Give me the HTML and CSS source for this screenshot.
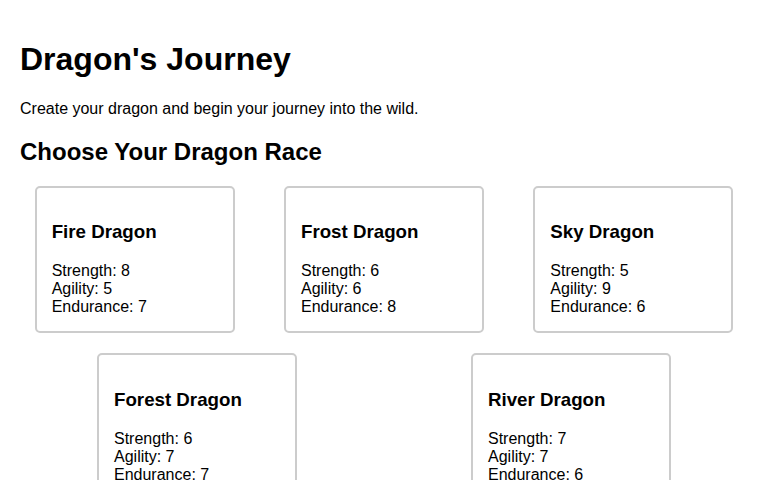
FILE: index.html
```html
<!DOCTYPE html>
<html lang="en">
<head>
<meta charset="utf-8">
<title>Dragon's Journey</title>
<link rel="stylesheet" href="styles.css">
</head>
<body>
  <h1 class="title">Dragon's Journey</h1>
  <p class="intro">Create your dragon and begin your journey into the wild.</p>
  <h2 class="section-title">Choose Your Dragon Race</h2>
  <div class="races">
    <div class="race-card">
      <h3 class="race-name">Fire Dragon</h3>
      <div class="stats">
        <div>Strength: 8</div>
        <div>Agility: 5</div>
        <div>Endurance: 7</div>
      </div>
    </div>
    <div class="race-card">
      <h3 class="race-name">Frost Dragon</h3>
      <div class="stats">
        <div>Strength: 6</div>
        <div>Agility: 6</div>
        <div>Endurance: 8</div>
      </div>
    </div>
    <div class="race-card">
      <h3 class="race-name">Sky Dragon</h3>
      <div class="stats">
        <div>Strength: 5</div>
        <div>Agility: 9</div>
        <div>Endurance: 6</div>
      </div>
    </div>
    <div class="race-card">
      <h3 class="race-name">Forest Dragon</h3>
      <div class="stats">
        <div>Strength: 6</div>
        <div>Agility: 7</div>
        <div>Endurance: 7</div>
      </div>
    </div>
    <div class="race-card">
      <h3 class="race-name">River Dragon</h3>
      <div class="stats">
        <div>Strength: 7</div>
        <div>Agility: 7</div>
        <div>Endurance: 6</div>
      </div>
    </div>
  </div>
</body>
</html>
```
FILE: styles.css
```css
body {
  margin: 0;
  padding: 20px;
  font-family: "Liberation Sans", Arial, sans-serif;
  color: #000;
  background: #fff;
}

.title {
  font-size: 32px;
  margin: 21.44px 0;
}

.intro {
  font-size: 16px;
  margin: 16px 0;
}

.section-title {
  font-size: 24px;
  margin: 19.92px 0;
}

.races {
  display: flex;
  flex-wrap: wrap;
  justify-content: space-around;
  margin: -10px;
}

.race-card {
  box-sizing: border-box;
  width: 200px;
  margin: 10px;
  padding: 15px;
  border: 2px solid #ccc;
  border-radius: 5px;
}

.race-name {
  font-size: 18.72px;
  margin: 18.72px 0;
}

.stats {
  font-size: 16px;
}
```
